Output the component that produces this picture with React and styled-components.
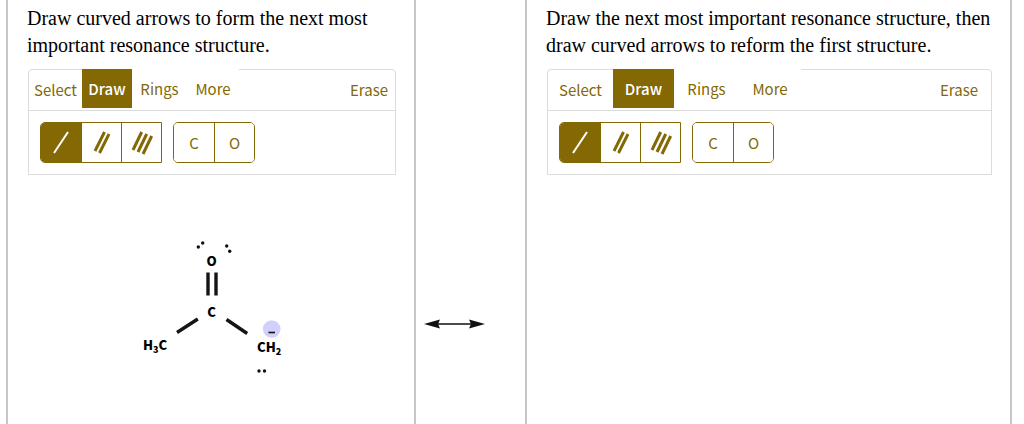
import React, { useState } from "react";
import styled, { createGlobalStyle, css } from "styled-components";

const olive = "#836804";
const line = "#dcdcdc";
const uiFont = '"Noto Sans CJK SC", "Open Sans", sans-serif';

const GlobalStyle = createGlobalStyle`
  *, *::before, *::after { box-sizing: border-box; }
  body { margin: 0; background: #fff; color: #000; }
`;

const Page = styled.main`
  display: grid;
  grid-template-columns: 410fr 109px 487fr;
  min-height: 100vh;
  padding: 0 12px 0 6px;
`;

const Panel = styled.section`
  min-width: 0;
  padding: 5px 18px 0 19px;
  border: solid #c6c6c6;
  border-width: 0 2px;
`;

const Prompt = styled.p`
  margin: 0;
  font: 20px/27px "Liberation Serif", serif;
`;

const Toolbar = styled.div`
  margin: 10px 0 0 1px;
  border: 1px solid ${line};
  border-radius: 4px 4px 0 0;
  font-family: ${uiFont};
`;

const TabRow = styled.div`
  display: flex;
  align-items: flex-start;
  height: 41px;
  border-bottom: 1px solid ${line};
`;

const ModeTabs = styled.div`
  display: flex;
  margin-top: -1px;
  background: #fff;
`;

const Tab = styled.button`
  height: 39px;
  padding: 0;
  border: 0;
  background: none;
  color: ${olive};
  font: 15px/39px ${uiFont};
  width: ${(p) => p.$width}px;
  cursor: pointer;
  ${(p) =>
    p.$active &&
    css`
      background: ${olive};
      color: #fff;
      font-weight: 500;
    `}
`;

const EraseTab = styled(Tab)`
  margin-left: auto;
`;

const Palette = styled.div`
  display: flex;
  gap: 11px;
  padding: 11px;
`;

const ButtonGroup = styled.div`
  display: flex;
  border: 1px solid ${olive};
  border-radius: ${(p) => (p.$rounded ? "5px" : "5px 0 0 5px")};
  overflow: hidden;
`;

const ToolButton = styled.button`
  display: flex;
  align-items: center;
  justify-content: center;
  width: 40px;
  height: 39px;
  padding: 0;
  border: 0;
  background: ${(p) => (p.$active ? olive : "#fff")};
  color: ${(p) => (p.$active ? "#fff" : olive)};
  font: 15px/39px ${uiFont};
  cursor: pointer;

  & + & {
    border-left: 1px solid ${olive};
  }
`;

const Molecule = styled.svg`
  display: block;
  margin: 60px 0 0 113px;
  font-family: ${uiFont};
  font-weight: 900;
  font-size: 13px;
`;

const Between = styled.div`
  padding: 318px 0 0 8px;
`;

const ResonanceArrow = styled.svg`
  display: block;
`;

const bondLines = {
  single: [[6, 23, 20, 2]],
  double: [
    [6, 21, 15.5, 2],
    [10.5, 23, 20, 4],
  ],
  triple: [
    [4, 20, 12.7, 2],
    [9, 22, 17.7, 4],
    [14, 24, 22.7, 6],
  ],
};

function BondIcon({ kind }) {
  return (
    <svg width="26" height="25" viewBox="0 0 26 25" aria-hidden="true">
      {bondLines[kind].map(([x1, y1, x2, y2]) => (
        <line
          key={x1}
          x1={x1}
          y1={y1}
          x2={x2}
          y2={y2}
          stroke="currentColor"
          strokeWidth={kind === "single" ? 2 : 3}
        />
      ))}
    </svg>
  );
}

function DrawingToolbar({ widths }) {
  const [tab, setTab] = useState("Draw");
  const [tool, setTool] = useState("single");
  const renderTab = (name) => (
    <Tab
      key={name}
      type="button"
      $width={widths[name]}
      $active={tab === name}
      onClick={() => setTab(name)}
    >
      {name}
    </Tab>
  );
  return (
    <Toolbar role="toolbar" aria-label="Drawing tools">
      <TabRow>
        {renderTab("Select")}
        <ModeTabs>{["Draw", "Rings", "More"].map(renderTab)}</ModeTabs>
        <EraseTab type="button" $width={widths.Erase}>
          Erase
        </EraseTab>
      </TabRow>
      <Palette>
        <ButtonGroup>
          {Object.keys(bondLines).map((kind) => (
            <ToolButton
              key={kind}
              type="button"
              aria-label={`${kind} bond`}
              $active={tool === kind}
              onClick={() => setTool(kind)}
            >
              <BondIcon kind={kind} />
            </ToolButton>
          ))}
        </ButtonGroup>
        <ButtonGroup $rounded>
          {["C", "O"].map((atom) => (
            <ToolButton
              key={atom}
              type="button"
              $active={tool === atom}
              onClick={() => setTool(atom)}
            >
              {atom}
            </ToolButton>
          ))}
        </ButtonGroup>
      </Palette>
    </Toolbar>
  );
}

const lonePairs = [
  [58.3, 12],
  [62.7, 8],
  [86.7, 11],
  [89.7, 16.3],
  [119, 136],
  [124.5, 136],
];

function Enolate() {
  return (
    <Molecule width="150" height="145" viewBox="0 0 150 145" role="img" aria-label="Acetone enolate">
      <circle cx="131.7" cy="94" r="8.8" fill="#d2d0fb" />
      {lonePairs.map(([cx, cy]) => (
        <circle key={`${cx}-${cy}`} cx={cx} cy={cy} r="1.7" fill="#111" />
      ))}
      <g stroke="#151515" strokeWidth="3.4">
        <path d="M68 37.5V60.5M76 37.5V60.5" />
        <path d="M57.8 84L37 97.5M86.5 84.5L107.2 98.5" />
      </g>
      <path d="M128.5 97.5H135" stroke="#111" strokeWidth="1.6" />
      <text x="71.7" y="31" textAnchor="middle">O</text>
      <text x="71.7" y="82" textAnchor="middle">C</text>
      <text x="3" y="115">
        H<tspan fontSize="9" dy="3">3</tspan>
        <tspan dy="-3">C</tspan>
      </text>
      <text x="117" y="117">
        CH<tspan fontSize="9" dy="3">2</tspan>
      </text>
    </Molecule>
  );
}

const compactTabs = { Select: 53, Draw: 50, Rings: 55, More: 52, Erase: 52 };
const wideTabs = { Select: 65, Draw: 61, Rings: 65, More: 62, Erase: 64 };

export default function App() {
  return (
    <>
      <GlobalStyle />
      <Page>
        <Panel>
          <Prompt>Draw curved arrows to form the next most important resonance structure.</Prompt>
          <DrawingToolbar widths={compactTabs} />
          <Enolate />
        </Panel>
        <Between>
          <ResonanceArrow width="61" height="12" viewBox="0 0 61 12" role="img" aria-label="Resonance arrow">
            <path d="M10 6H51" stroke="#111" strokeWidth="1.6" />
            <path d="M0 6L16 1.4L14 6L16 10.6ZM61 6L45 1.4L47 6L45 10.6Z" fill="#111" />
          </ResonanceArrow>
        </Between>
        <Panel>
          <Prompt>
            Draw the next most important resonance structure, then draw curved arrows to reform the
            first structure.
          </Prompt>
          <DrawingToolbar widths={wideTabs} />
        </Panel>
      </Page>
    </>
  );
}
